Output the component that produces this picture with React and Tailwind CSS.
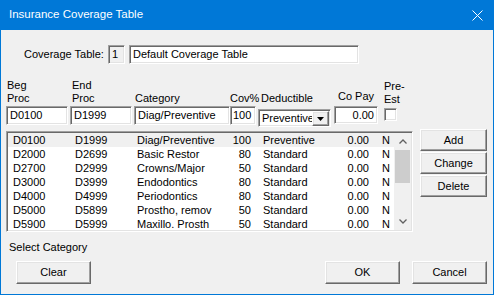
import React from "react";

const sunken =
  "border border-t-[#a0a0a0] border-l-[#a0a0a0] border-b-white border-r-white shadow-[inset_1px_1px_0_#696969,inset_-1px_-1px_0_#e3e3e3]";
const raised =
  "border border-t-white border-l-white border-b-[#696969] border-r-[#696969] shadow-[inset_-1px_-1px_0_#a0a0a0,inset_1px_1px_0_#e3e3e3] bg-[#f0f0f0]";

const rows = [
  ["D0100", "D1999", "Diag/Preventive", "100", "Preventive", "0.00", "N"],
  ["D2000", "D2699", "Basic Restor", "80", "Standard", "0.00", "N"],
  ["D2700", "D2999", "Crowns/Major", "50", "Standard", "0.00", "N"],
  ["D3000", "D3999", "Endodontics", "80", "Standard", "0.00", "N"],
  ["D4000", "D4999", "Periodontics", "80", "Standard", "0.00", "N"],
  ["D5000", "D5899", "Prostho, remov", "50", "Standard", "0.00", "N"],
  ["D5900", "D5999", "Maxillo. Prosth", "50", "Standard", "0.00", "N"],
];

function Button({ children, className = "" }) {
  return (
    <div className={`${raised} flex items-center justify-center ${className}`}>
      {children}
    </div>
  );
}

function Chevron({ up }) {
  return (
    <svg width="8" height="5" viewBox="0 0 8 5">
      <path
        d={up ? "M0.5 4.5 L4 1 L7.5 4.5" : "M0.5 0.5 L4 4 L7.5 0.5"}
        fill="none"
        stroke="#606060"
        strokeWidth="1.3"
      />
    </svg>
  );
}

export default function App() {
  return (
    <div className="w-[494px] h-[295px] bg-[#0078d7] px-px pb-px flex flex-col font-['Liberation_Sans',Arial,sans-serif] text-[11px] text-black">
      {/* Title bar */}
      <div className="h-[30px] flex items-center justify-between pl-[8px] pr-[10px] text-white text-[11.5px]">
        <span>Insurance Coverage Table</span>
        <svg width="11" height="11" viewBox="0 0 11 11">
          <path d="M0.5 0.5 L10.5 10.5 M10.5 0.5 L0.5 10.5" stroke="white" strokeWidth="1" />
        </svg>
      </div>

      <div className="flex-1 bg-[#f0f0f0] flex flex-col">
        {/* Coverage table */}
        <div className="mt-[15px] flex items-center h-[19px] pl-[23px]">
          <span className="w-[84px]">Coverage Table:</span>
          <div className={`${sunken} w-[17px] h-[19px] bg-[#f0f0f0] pl-[3px] leading-[17px]`}>1</div>
          <div className={`${sunken} ml-[4px] w-[230px] h-[19px] bg-white pl-[3px] leading-[17px]`}>
            Default Coverage Table
          </div>
        </div>

        {/* Edit row */}
        <div className="mt-[15px] flex items-start pl-[5px]">
          <div className="w-[62px] flex flex-col">
            <div className="h-[26px] leading-[13px] pl-px">Beg<br />Proc</div>
            <div className={`${sunken} mt-px h-[19px] bg-white pl-[3px] leading-[17px]`}>D0100</div>
          </div>
          <div className="ml-[2px] w-[62px] flex flex-col">
            <div className="h-[26px] leading-[13px] pl-[2px]">End<br />Proc</div>
            <div className={`${sunken} mt-px h-[19px] bg-white pl-[3px] leading-[17px]`}>D1999</div>
          </div>
          <div className="ml-[2px] w-[96px] flex flex-col">
            <div className="h-[26px] leading-[13px] pl-px pt-[13px]">Category</div>
            <div className={`${sunken} mt-px h-[19px] bg-white pl-[3px] leading-[17px]`}>Diag/Preventive</div>
          </div>
          <div className="w-[26px] flex flex-col">
            <div className="h-[26px] leading-[13px] pt-[13px] whitespace-nowrap">Cov%</div>
            <div className={`${sunken} mt-px h-[19px] bg-white pl-[2px] leading-[17px] overflow-hidden`}>100</div>
          </div>
          <div className="ml-[2px] w-[73px] flex flex-col">
            <div className="h-[26px] leading-[13px] pl-[3px] pt-[13px]">Deductible</div>
            <div className={`${sunken} mt-[4px] h-[18px] bg-white flex p-px`}>
              <span className="flex-1 overflow-hidden whitespace-nowrap pl-[2px] leading-[15px]">Preventive</span>
              <div className={`${raised} w-[17px] h-[15px] flex items-center justify-center`}>
                <svg width="7" height="4" viewBox="0 0 7 4">
                  <path d="M0 0 L7 0 L3.5 4 Z" fill="black" />
                </svg>
              </div>
            </div>
          </div>
          <div className="ml-[3px] w-[44px] flex flex-col">
            <div className="h-[26px] leading-[13px] pl-[4px] pt-[11px]">Co Pay</div>
            <div className={`${sunken} mt-px h-[18px] bg-white pr-[3px] text-right leading-[16px]`}>0.00</div>
          </div>
          <div className="ml-[6px] flex flex-col">
            <div className="h-[26px] leading-[13px] pt-[1px]">Pre-<br />Est</div>
            <div className={`${sunken} mt-[3px] w-[13px] h-[13px] bg-white`} />
          </div>
        </div>

        {/* List + side buttons */}
        <div className="mt-[4px] flex items-start pl-[5px]">
          <div className={`${sunken} w-[407px] h-[101px] bg-white p-px flex`}>
            <div className="flex-1 flex flex-col">
              {rows.map((r, i) => (
                <div
                  key={r[0]}
                  className={`h-[14px] leading-[14px] flex whitespace-nowrap pl-[5px] ${i === 0 ? "bg-[#f0f0f0]" : ""}`}
                >
                  <span className="w-[62px]">{r[0]}</span>
                  <span className="w-[62px]">{r[1]}</span>
                  <span className="w-[90px]">{r[2]}</span>
                  <span className="w-[24px] text-right">{r[3]}</span>
                  <span className="ml-[12px] w-[80px]">{r[4]}</span>
                  <span className="w-[26px] text-right">{r[5]}</span>
                  <span className="ml-[13px]">{r[6]}</span>
                </div>
              ))}
            </div>
            <div className="w-[17px] bg-[#f0f0f0] flex flex-col">
              <div className="h-[17px] flex items-center justify-center">
                <Chevron up />
              </div>
              <div className="h-[33px] mx-px bg-[#cdcdcd]" />
              <div className="flex-1" />
              <div className="h-[17px] flex items-center justify-center">
                <Chevron />
              </div>
            </div>
          </div>
          <div className="ml-[7px] -mt-[2px] w-[67px] flex flex-col gap-[1px]">
            <Button className="h-[22px]">Add</Button>
            <Button className="h-[22px]">Change</Button>
            <Button className="h-[22px]">Delete</Button>
          </div>
        </div>

        <div className="mt-[9px] pl-[8px] leading-[13px]">Select Category</div>

        <div className="mt-[7px] flex pl-[15px] pr-[6px]">
          <Button className="w-[75px] h-[23px]">Clear</Button>
          <div className="flex-1" />
          <Button className="w-[75px] h-[23px]">OK</Button>
          <Button className="ml-[12px] w-[75px] h-[23px]">Cancel</Button>
        </div>
      </div>
    </div>
  );
}
